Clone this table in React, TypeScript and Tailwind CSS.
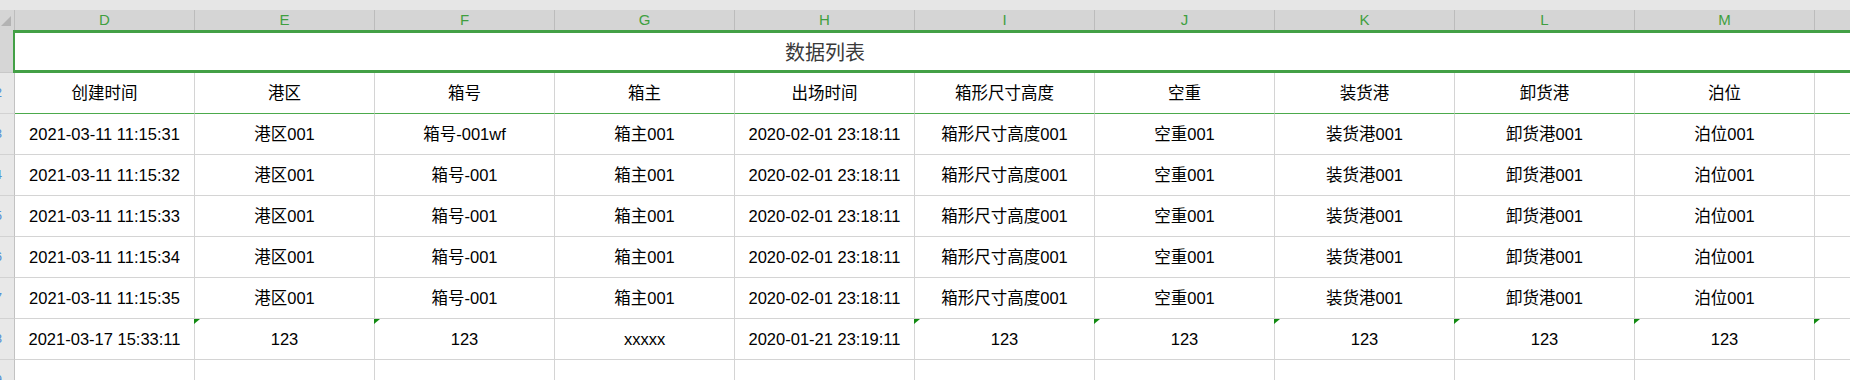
import React from 'react';

const COLS = ['D', 'E', 'F', 'G', 'H', 'I', 'J', 'K', 'L', 'M'];
const HEADERS = ['创建时间', '港区', '箱号', '箱主', '出场时间', '箱形尺寸高度', '空重', '装货港', '卸货港', '泊位'];

const base = ['港区001', '箱号-001', '箱主001', '2020-02-01 23:18:11', '箱形尺寸高度001', '空重001', '装货港001', '卸货港001', '泊位001'];

const ROWS: { cells: string[]; flags?: boolean[] }[] = [
  { cells: ['2021-03-11 11:15:31', '港区001', '箱号-001wf', ...base.slice(2)] },
  { cells: ['2021-03-11 11:15:32', ...base] },
  { cells: ['2021-03-11 11:15:33', ...base] },
  { cells: ['2021-03-11 11:15:34', ...base] },
  { cells: ['2021-03-11 11:15:35', ...base] },
  {
    cells: ['2021-03-17 15:33:11', '123', '123', 'xxxxx', '2020-01-21 23:19:11', '123', '123', '123', '123', '123'],
    flags: [false, true, true, false, false, true, true, true, true, true],
  },
];

const Flag = () => (
  <span className="absolute -left-px top-0 w-[6px] h-[5px] bg-[#118a11] [clip-path:polygon(0_0,100%_0,0_100%)]" />
);

const RowNum: React.FC<{ n: number; h?: string }> = ({ n, h = 'h-[41px]' }) => (
  <div className={`${h} w-[15px] shrink-0 flex items-center justify-end pr-[12px] overflow-hidden bg-[#e8e8e8] border-r border-b border-r-[#c2c2c2] border-b-[#d2d2d2] text-[13px] text-[#4f8fd6]`}>
    {n}
  </div>
);

const App: React.FC = () => {
  return (
    <div className="w-[1850px] h-[380px] overflow-hidden bg-white font-['Liberation_Sans','Noto_Sans_CJK_SC',sans-serif] text-[16.5px] text-black">
      {/* top strip */}
      <div className="h-[10px] bg-[#e6e6e6]" />

      {/* column letters */}
      <div className="flex h-[20px] bg-[#d5d5d5]">
        <div className="relative w-[15px] shrink-0 border-r border-[#bdbdbd]">
          <svg className="absolute left-0 top-0" width="14" height="20" viewBox="0 0 14 20">
            <polygon points="1,16 11,16 11,6" fill="#b3b3b3" />
          </svg>
        </div>
        {COLS.map((c) => (
          <div key={c} className="w-[180px] shrink-0 border-r border-[#bcbcbc] text-center text-[15px] leading-[20px] text-[#3f9f3f]">
            {c}
          </div>
        ))}
        <div className="flex-1" />
      </div>

      {/* title row */}
      <div className="flex h-[43px]">
        <div className="w-[13px] shrink-0 bg-[#d6d6d6] border-b border-[#c8c8c8]" />
        <div className="flex-1 flex items-center border-l-2 border-t-[3px] border-b-[3px] border-[#43a046] bg-white">
          <div className="w-[1620px] text-center text-[20px] text-[#3a3a3a] font-['Noto_Sans_CJK_SC',sans-serif]">数据列表</div>
        </div>
      </div>

      {/* header row */}
      <div className="flex">
        <RowNum n={2} />
        {HEADERS.map((h) => (
          <div key={h} className="h-[41px] w-[180px] shrink-0 flex items-center justify-center border-r border-r-[#d4d4d4] border-b border-b-[#4caa4c]">
            {h}
          </div>
        ))}
        <div className="flex-1 h-[41px] border-b border-b-[#4caa4c]" />
      </div>

      {/* data rows */}
      {ROWS.map((r, i) => (
        <div key={i} className="flex">
          <RowNum n={i + 3} />
          {r.cells.map((v, j) => (
            <div key={j} className="relative h-[41px] w-[180px] shrink-0 flex items-center justify-center border-r border-b border-[#d4d4d4]">
              {r.flags?.[j] && <Flag />}
              {v}
            </div>
          ))}
          <div className="relative flex-1 h-[41px] border-b border-[#d4d4d4]">{r.flags && <Flag />}</div>
        </div>
      ))}

      {/* empty row */}
      <div className="flex">
        <RowNum n={9} />
        {COLS.map((c) => (
          <div key={c} className="h-[41px] w-[180px] shrink-0 border-r border-b border-[#d4d4d4]" />
        ))}
        <div className="flex-1 h-[41px] border-b border-[#d4d4d4]" />
      </div>
    </div>
  );
};

export default App;
